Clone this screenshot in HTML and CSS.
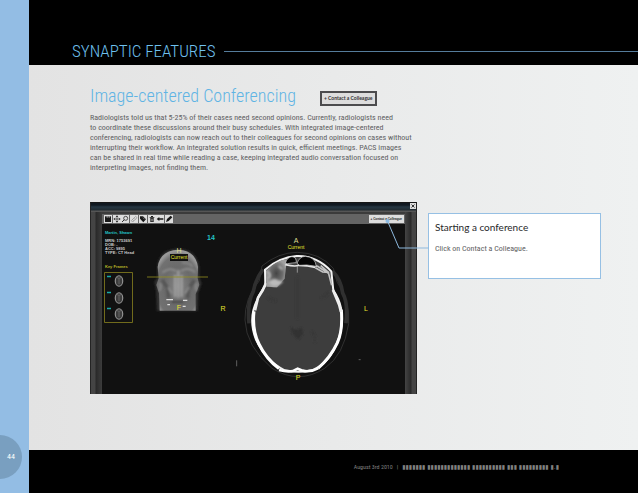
FILE: index.html
```html
<!DOCTYPE html>
<html lang="en">
<head>
<meta charset="utf-8">
<title>Synaptic Features</title>
<link rel="stylesheet" href="styles.css">
</head>
<body>
<div class="page">
  <aside class="rail"><span class="page-number">44</span></aside>
  <div class="sheet">
    <header class="banner"><h1>SYNAPTIC FEATURES</h1><span class="rule"></span></header>
    <main class="content">
      <div class="title-row">
        <h2>Image-centered Conferencing</h2>
        <button class="contact" type="button">+ Contact a Colleague</button>
      </div>
      <p class="intro">Radiologists told us that 5-25% of their cases need second opinions. Currently, radiologists need<br>to coordinate these discussions around their busy schedules. With integrated image-centered<br>conferencing, radiologists can now reach out to their colleagues for second opinions on cases without<br>interrupting their workflow. An integrated solution results in quick, efficient meetings. PACS images<br>can be shared in real time while reading a case, keeping integrated audio conversation focused on<br>interpreting images, not finding them.</p>
      <div class="demo">
        <section class="viewer">
          <div class="titlebar"><button class="close" type="button" aria-label="Close"><svg viewBox="0 0 6 6"><path d="M1.500 1.500l3 3M4.500 1.500l-3 3" stroke="#333" stroke-width="1"/></svg></button></div>
          <div class="workspace">
            <div class="toolbar">
              <div class="tools">
                <button type="button" aria-label="Save"><svg viewBox="0 0 24 24"><path d="M3 4h18v17H3z" fill="#181818"/><path d="M8 3h3v5H8zM14 3h3v5h-3z" fill="#aaa"/></svg></button>
                <button type="button" aria-label="Move"><svg viewBox="0 0 24 24"><path d="M12 1l4 6H8zM12 23l4-6H8zM1 12l6-4v8zM23 12l-6-4v8zM10 10h4v4h-4z" fill="#181818"/></svg></button>
                <button type="button" aria-label="Zoom"><svg viewBox="0 0 24 24"><circle cx="14" cy="10" r="6" fill="none" stroke="#333" stroke-width="2.500"/><path d="M10 14l-7 7" stroke="#333" stroke-width="3"/></svg></button>
                <button type="button" aria-label="Measure"><svg viewBox="0 0 24 24"><path d="M4 17L17 4l4 4L8 21zM8 14l3 3M12 10l3 3" fill="none" stroke="#888" stroke-width="2"/></svg></button>
                <button type="button" aria-label="Tag"><svg viewBox="0 0 24 24"><path d="M3 4h9l9 9-8 9-10-11z" fill="#181818"/><path d="M12 8l5 5" stroke="#aaa" stroke-width="2"/></svg></button>
                <button type="button" aria-label="Delete"><svg viewBox="0 0 24 24"><path d="M5 6h14v2H5zM9 3h6v3H9zM7 9h10v12H7z" fill="#181818"/><path d="M10 11v8M14 11v8" stroke="#bbb" stroke-width="2"/></svg></button>
                <button type="button" aria-label="Arrow"><svg viewBox="0 0 24 24"><path d="M2 12l8-6v4h12v4H10v4z" fill="#181818"/></svg></button>
                <button type="button" aria-label="Draw"><svg viewBox="0 0 24 24"><path d="M3 21l3-9L17 2l5 5-11 11z" fill="#181818"/></svg></button>
              </div>
              <button class="call" type="button">+ Contact a Colleague</button>
            </div>
            <svg class="stage" viewBox="102 224 303 170" role="img" aria-label="CT head study">
              <defs>
                <radialGradient id="scout" cx=".5" cy=".6" r=".58"><stop offset="0" stop-color="#858585"/><stop offset=".55" stop-color="#6b6b6b"/><stop offset=".86" stop-color="#717171"/><stop offset="1" stop-color="#999"/></radialGradient>
                <radialGradient id="mass"><stop offset="0" stop-color="#454545"/><stop offset=".6" stop-color="#6c6c6c"/><stop offset="1" stop-color="#a0a0a0"/></radialGradient>
                <filter id="soft" x="-.2" y="-.2" width="1.4" height="1.4"><feGaussianBlur stdDeviation="3"/></filter>
                <g id="slice"><ellipse rx="4.300" ry="5.800" fill="#999"/><ellipse rx="3.200" ry="4.700" fill="#3d3d3d"/><path d="M-2-3.500Q0-1.500 2-3.500M0-2v5" stroke="#777" stroke-width=".7" fill="none"/></g>
              </defs>
              <path d="M102 224h303v170H102z" fill="#111"/>
              <g class="label">
                <text class="cyan" x="105" y="234">Martin, Shawn</text>
                <text x="105" y="242">MRN: 1753691</text>
                <text x="105" y="246">DOB: -</text>
                <text x="105" y="250">ACC: 9895</text>
                <text x="105" y="254">TYPE: CT Head</text>
                <text class="yellow" x="105" y="268">Key Frames</text>
              </g>
              <path d="M104.500 272.500h28v50h-28z" fill="none" stroke="#8a8320" stroke-width=".8"/>
              <use href="#slice" x="119" y="281"/><use href="#slice" x="119" y="298"/><use href="#slice" x="119" y="314"/>
              <path d="M107 276.500h4M107 292.500h4M107 308.500h4" stroke="#18aaa8" stroke-width="1.500"/>
              <!-- scout view: coordinates in thirds of a pixel -->
              <g transform="translate(135 230) scale(.3333)">
                <path d="M66 242l-2-60-5-28 9-9-1-35Q72 58 130 56q56 3 62 55l1 32 6 18-10 28-1 53z" fill="#343434" filter="url(#soft)"/>
                <path d="M74 242l-2-52-8-25 7-20-3-34Q74 62 130 59q52 2 59 52l-1 34 5 20-11 28v49z" fill="url(#scout)"/>
                <g filter="url(#soft)" fill="none">
                  <path d="M82 128q23-18 42-4M137 124q22-15 44 3M141 98q22 0 32 11" stroke="#959595" stroke-width="4"/>
                  <path d="M81 150l16 23 4 32M178 150l-17 27-4 28" stroke="#555" stroke-width="10"/>
                  <path d="M120 135v66M130 121v82M140 135v66" stroke="#ababab" stroke-width="5"/>
                  <path d="M75 160q5 13-2 22M186 160q-7 12 0 22M99 172l12 18M163 171l-13 19" stroke="#999" stroke-width="4"/>
                  <path d="M110 216h35" stroke="#444" stroke-width="6"/>
                </g>
                <path d="M94 209h20M144 211h13M97 224h8M143 229h9" stroke="#ddd" stroke-width="4"/>
              </g>
              <path d="M147 277h61" stroke="#969020" stroke-width=".8"/>
              <path d="M170 254h18v7h-18z" fill="#111"/>
              <!-- axial view: coordinates in thirds of a pixel -->
              <g transform="translate(230 228) scale(.3333)" fill="none">
                <path d="M96 114Q145 73 202 73q68 1 108 48l11 41q40 58 35 125-14 95-72 134-78 50-158 0Q48 355 45 276q-2-64 43-118z" stroke="#414141" stroke-width="2"/>
                <path d="M99 124Q76 155 70 190 51 225 57 286M308 130q25 25 30 65 17 30 10 91" stroke="#303030" stroke-width="11"/>
                <path d="M105 125Q150 87 200 84q60-2 104 46l6 57q17 25 23 53 8 54-8 95-25 71-79 92-41 9-82 0-57-29-86-92-18-46-8-88 10-38 36-75z" fill="#3d3d3d" stroke="#f3f3f3" stroke-width="6"/>
                <path d="M72 250q-6 56 15 98 21 44 60 74M334 245q5 63-12 100-22 46-58 76" stroke="#fff" stroke-width="9"/>
                <path d="M108 165l-10 22-14 22-9 38M309 186l19 46 5 20" stroke="#eee" stroke-width="8"/>
                <path d="M147 426q28 7 44 2l12-6 15 6q22 6 46-7" stroke="#fff" stroke-width="8"/>
                <path d="M108 128q31-31 62-34l-2 23-4 35-23 26-32-2z" fill="url(#mass)"/>
                <path d="M116 162q15-15 28-5l16 4-15 12q-20 8-29-11z" fill="#bbb" filter="url(#soft)"/>
                <path d="M113 130q12 10 2 22M146 114l11 10" stroke="#ccc" stroke-width="5" filter="url(#soft)"/>
                <path d="M166 110q30 7 40 2 28 0 50 6" stroke="#e5e5e5" stroke-width="5"/>
                <path d="M242 111l21 4 33 22 9 35M256 119l22 13 20 1M272 113l25 22" stroke="#c2c2c2" stroke-width="5"/>
                <path d="M166 106q6-20 20-20 14 1 13 18l-12 1-15 2zM201 106q8-21 25-21 30 2 33 30l-29-4-21 1z" fill="#050505" stroke="#ddd" stroke-width="2"/>
                <path d="M202 114v20" stroke="#bbb" stroke-width="2"/>
                <g filter="url(#soft)"><path d="M181 298l17 9 17-8 5 16-15 20-18-19z" fill="#313131"/><path d="M202 147v126M273 210q15-5 22-17M111 204q13 17 27 13M245 310q15 20 9 33" stroke="#373737" stroke-width="5"/></g>
                <path d="M20 397v18M386 395h6" stroke="#888" stroke-width="2"/>
              </g>
              <g class="marks" text-anchor="middle">
                <text class="cyan" x="211" y="240">14</text>
                <text class="pale" x="179" y="253">H</text><text x="179" y="310">F</text>
                <text x="223" y="311">R</text><text x="366" y="311">L</text>
                <text class="pale" x="296" y="243">A</text><text x="298" y="380">P</text>
                <text class="small" x="179" y="259">Current</text><text class="small" x="296" y="249">Current</text>
              </g>
            </svg>
          </div>
        </section>
        <section class="note">
          <svg class="connector" viewBox="0 0 44 34" aria-hidden="true"><path d="M2.500 6L14 33H44" fill="none" stroke="#8db9de" stroke-width="1"/><circle cx="2.500" cy="6" r="2" fill="#8dbbe3"/></svg>
          <h3>Starting a conference</h3>
          <p>Click on Contact a Colleague.</p>
        </section>
      </div>
    </main>
    <footer class="footer"><span>August 3rd 2010</span><span>|</span><span class="blocks">▮▮▮▮▮▮▮ ▮▮▮▮▮▮▮▮▮▮▮▮▮ ▮▮▮▮▮▮▮▮▮▮ ▮▮▮ ▮▮▮▮▮▮▮▮▮ ▮.▮</span></footer>
  </div>
</div>
</body>
</html>
```
FILE: styles.css
```css
* { box-sizing: border-box; }
body { margin: 0; font-family: "Roboto Condensed", "Open Sans Condensed", Lato, sans-serif; color: #606062; }
h1, h2, h3, p { margin: 0; font-weight: 400; }
button { margin: 0; padding: 0; border: 0; font-family: inherit; }
svg { display: block; }

.page { display: flex; min-height: 100vh; }
.rail { flex: 0 0 29px; display: flex; align-items: flex-end; padding-bottom: 14px; background: #93bde4; }
.page-number { width: 22px; height: 44px; border-radius: 0 22px 22px 0; background: #799fc0; color: #fff; font-size: 8px; line-height: 43px; text-align: right; padding-right: 7px; }
.sheet { flex: 1; min-width: 0; display: flex; flex-direction: column; background: #000; }

.banner { display: flex; align-items: center; gap: 9px; height: 65px; padding: 37px 0 0 43px; }
h1, h2 { font-weight: 300; white-space: nowrap; }
h1 { color: #6fc1ef; font-size: 17px; line-height: 28px; }
.rule { flex: 1; height: 1px; background: #557c9b; }

.content { flex: 1; padding: 18px 37px 0 61px; background: linear-gradient(90deg, #e3e3e3, #eff1f1); }
.title-row { display: flex; align-items: center; gap: 24px; }
h2 { color: #5fb4e4; font-size: 18px; line-height: 26px; }
.contact { padding: 0 2px; height: 15px; margin-top: 4px; border: 2px solid #4c4c4e; background: #ddd; color: #333; font-family: Lato, sans-serif; font-size: 5px; font-weight: 700; white-space: nowrap; }
.intro { margin-top: 4px; font-size: 8px; line-height: 10px; white-space: nowrap; }

.demo { display: grid; grid-template-columns: 327fr 173fr; gap: 11px; align-items: start; margin-top: 29px; }
.viewer { background: #3b3b3b; border: 1px solid #242424; border-top-color: #161616; border-bottom: 0; }
.titlebar { height: 9px; display: flex; justify-content: flex-end; background: linear-gradient(#101820 2px, #253642 4px, #202a30 7px, #555 8px); }
.close { width: 6px; height: 6px; background: #ddd; }
.workspace { padding: 2px 11px 0 11px; background: linear-gradient(90deg, #444 0 4px, #292929 5px, #393939 10px, transparent 10px calc(100% - 11px), #444 calc(100% - 11px), #292929 calc(100% - 5px), #444 calc(100% - 4px)); }
.toolbar { display: flex; justify-content: space-between; align-items: center; height: 10px; padding: 0 1px 0 2px; background: #646464; }
.tools { display: flex; justify-content: space-between; width: 69px; }
.tools button { width: 8px; height: 8px; background: #ddd; }
.call { height: 8px; padding: 0 2px; background: #ddd; color: #222; font: 700 3px/8px "Liberation Sans", sans-serif; white-space: nowrap; }
.stage { width: 100%; }
.stage text { font-family: "Liberation Sans", sans-serif; }
.label text { font-size: 4px; font-weight: 700; fill: #ccc; }
.marks text { font-size: 7px; fill: #e6e32f; }
.marks .small { font-size: 5px; }
.stage .cyan { fill: #24c4c6; font-weight: 700; }
.stage .yellow { fill: #b8b428; }
.stage .pale { fill: #dedc90; }

.note { position: relative; margin-top: 11px; min-height: 66px; padding: 5px 6px; border: 1px solid #96c0e4; background: #fff; }
.connector { position: absolute; right: 100%; top: 1px; width: 44px; height: 34px; }
.note h3 { color: #27272a; font-family: Lato, sans-serif; font-size: 10px; line-height: 16px; }
.note p { margin-top: 8px; font-size: 8px; line-height: 12px; }

.footer { display: flex; gap: 4px; height: 43px; padding: 11px 79px 0 0; justify-content: flex-end; color: #808080; font-size: 6px; line-height: 12px; white-space: nowrap; }
.blocks { font-family: "DejaVu Sans", sans-serif; }
```
